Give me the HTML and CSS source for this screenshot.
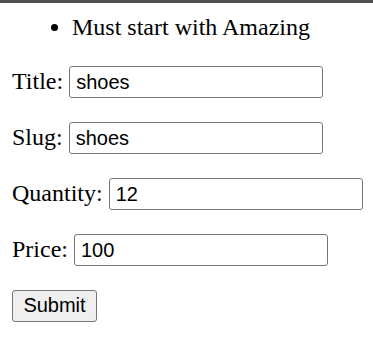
FILE: index.html
```html
<!DOCTYPE html>
<html>
<head>
<meta charset="utf-8">
<link rel="stylesheet" href="styles.css">
</head>
<body>
<div class="topbar"></div>
<div class="page">
  <ul class="errors">
    <li>Must start with Amazing</li>
  </ul>
  <form class="form">
    <p class="row"><label>Title:</label> <input class="field" type="text" value="shoes"></p>
    <p class="row"><label>Slug:</label> <input class="field" type="text" value="shoes"></p>
    <p class="row"><label>Quantity:</label> <input class="field" type="text" value="12"></p>
    <p class="row"><label>Price:</label> <input class="field" type="text" value="100"></p>
    <p class="row"><button class="submit" type="submit">Submit</button></p>
  </form>
</div>
</body>
</html>
```
FILE: styles.css
```css
html, body {
  margin: 0;
  padding: 0;
  background: #fff;
}
body {
  font-family: "Liberation Serif", "Times New Roman", serif;
  font-size: 24px;
  color: #000;
}
.topbar {
  height: 3px;
  background: #505050;
}
.page {
  padding: 0 12px;
}
.errors {
  margin: 11px 0 24px 0;
  padding-left: 60px;
  line-height: 27.6px;
}
.form {
  margin: 0;
}
.row {
  margin: 24px 0;
  height: 32px;
  display: flex;
  align-items: center;
  gap: 0;
}
.row label {
  margin-right: 6px;
}
.field {
  box-sizing: border-box;
  width: 254px;
  height: 32px;
  border: 1.5px solid #767676;
  border-radius: 3px;
  padding: 1px 3px 0 6px;
  font-family: "Liberation Sans", Arial, sans-serif;
  font-size: 20px;
  color: #000;
  background: #fff;
  margin: 0;
}
.submit {
  box-sizing: border-box;
  height: 32px;
  width: 85px;
  padding: 0;
  border: 1.5px solid #767676;
  border-radius: 3px;
  background: #efefef;
  font-family: "Liberation Sans", Arial, sans-serif;
  font-size: 20px;
  color: #000;
}
```
